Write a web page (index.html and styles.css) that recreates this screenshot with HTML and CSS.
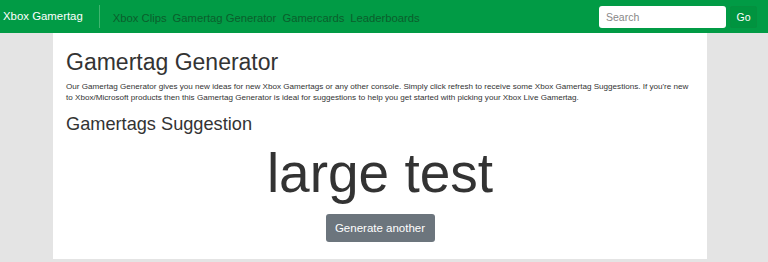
FILE: index.html
```html
<!DOCTYPE html>
<html lang="en">
<head>
  <meta charset="UTF-8" />
  <meta name="viewport" content="width=device-width, initial-scale=1.0" />
  <title>Gamertag Generator</title>
  <link rel="stylesheet" href="styles.css">
</head>
<body>
  <nav class="navbar">
    <a class="brand" href="#">Xbox Gamertag</a>
    <ul class="nav-links">
      <li><a href="#">Xbox Clips</a></li>
      <li><a href="#">Gamertag Generator</a></li>
      <li><a href="#">Gamercards</a></li>
      <li><a href="#">Leaderboards</a></li>
    </ul>
    <form class="search">
      <input type="text" placeholder="Search" />
      <button type="button">Go</button>
    </form>
  </nav>

  <main class="container">
    <h1>Gamertag Generator</h1>
    <p class="intro">Our Gamertag Generator gives you new ideas for new Xbox Gamertags or any other console. Simply click refresh to receive some Xbox Gamertag Suggestions. If you're new<br>to Xbox/Microsoft products then this Gamertag Generator is ideal for suggestions to help you get started with picking your Xbox Live Gamertag.</p>

    <h2>Gamertags Suggestion</h2>
    <div class="suggestion">large test</div>
    <div class="actions">
      <button class="btn-generate">Generate another</button>
    </div>
  </main>
</body>
</html>
```

FILE: styles.css
```css
body {
  margin: 0;
  font-family: 'Liberation Sans', Arial, sans-serif;
  background: #e4e4e4;
  color: #333;
}

.navbar {
  display: flex;
  align-items: center;
  height: 33px;
  background: #019b45;
  padding: 0 11px 0 3px;
}

.brand {
  color: #fff;
  text-decoration: none;
  font-size: 11.4px;
  padding-right: 16px;
  border-right: 1px solid #3fb56f;
  line-height: 23px;
}

.nav-links {
  display: flex;
  list-style: none;
  margin: 0 0 0 13px;
  padding: 0;
  gap: 6px;
}

.nav-links a {
  color: #0b5e2c;
  text-decoration: none;
  font-size: 11.25px;
}

.search {
  margin-left: auto;
  display: flex;
  align-items: center;
  gap: 4px;
}

.search input {
  width: 127px;
  height: 22px;
  box-sizing: border-box;
  border: none;
  border-radius: 3px;
  padding: 0 7px;
  font-family: inherit;
  font-size: 10.5px;
}

.search input::placeholder {
  color: #888;
}

.search button {
  width: 27px;
  height: 22px;
  background: #00943f;
  border: 1px solid #05903f;
  border-radius: 2px;
  color: #fff;
  font-family: inherit;
  font-size: 10.5px;
  padding: 0;
}

.container {
  width: 628px;
  margin: 0 auto 0 53px;
  background: #fff;
  padding: 14px 13px 17px;
}

h1 {
  font-size: 23px;
  font-weight: 400;
  margin: 0;
  line-height: 30px;
}

.intro {
  font-size: 8.1px;
  line-height: 11px;
  margin: 4px 0 9px;
  color: #333;
}

h2 {
  font-size: 18.2px;
  font-weight: 400;
  margin: 0;
  line-height: 24px;
}

.suggestion {
  text-align: center;
  font-size: 55px;
  line-height: 62px;
  margin-top: 6px;
}

.actions {
  text-align: center;
  margin-top: 10px;
}

.btn-generate {
  background: #6c757d;
  color: #fff;
  border: none;
  border-radius: 3px;
  font-family: inherit;
  font-size: 11.5px;
  width: 109px;
  height: 28px;
  padding: 0;
}
```
